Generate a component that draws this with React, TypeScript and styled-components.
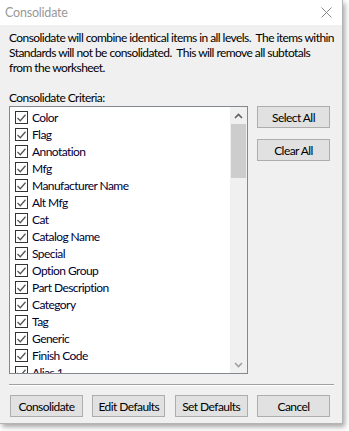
import styled, { createGlobalStyle } from 'styled-components';

const GlobalStyle = createGlobalStyle`
  html, body {
    margin: 0;
    padding: 0;
    background: #ffffff;
  }
  body {
    font-family: Lato, "Liberation Sans", Arial, sans-serif;
    font-size: 12px;
    letter-spacing: -0.56px;
  }
`;

const Page = styled.div`
  width: 349px;
  height: 431px;
  overflow: hidden;
`;

const Window = styled.div`
  width: 342px;
  height: 423px;
  background: #f0f0f0;
  border-right: 1px solid #b4b4b4;
  border-bottom: 1px solid #b4b4b4;
  box-shadow: 2px 3px 5px rgba(0, 0, 0, 0.35);
  display: flex;
  flex-direction: column;
  overflow: hidden;
`;

const TitleBar = styled.div`
  height: 25px;
  flex: none;
  background: #ffffff;
  display: flex;
  align-items: center;
  justify-content: space-between;
  padding: 0 10px 0 5px;
  color: #999999;
  font-size: 12.5px;
  letter-spacing: -0.2px;
`;

const Body = styled.div`
  flex: 1;
  padding: 5px 12px 0 9px;
  display: flex;
  flex-direction: column;
  color: #000000;
`;

const Description = styled.p`
  margin: 0;
  line-height: 15px;
  white-space: pre;
`;

const Label = styled.div`
  margin-top: 15px;
  line-height: 15px;
`;

const Middle = styled.div`
  margin-top: 1px;
  display: flex;
  gap: 9px;
`;

const ListBox = styled.div`
  width: 237px;
  height: 266px;
  flex: none;
  border: 1px solid #828790;
  background: #ffffff;
  display: flex;
  overflow: hidden;
`;

const Items = styled.div`
  flex: 1;
  padding-top: 2px;
  overflow: hidden;
`;

const Item = styled.div`
  height: 17px;
  display: flex;
  align-items: center;
  padding-left: 5px;
  gap: 4px;
  color: #000033;
  white-space: nowrap;
`;

const Box = styled.span`
  width: 11px;
  height: 11px;
  border: 1px solid #333333;
  background: #ffffff;
  display: flex;
  align-items: center;
  justify-content: center;
  flex: none;
`;

const Scrollbar = styled.div`
  width: 17px;
  flex: none;
  background: #f0f0f0;
  display: flex;
  flex-direction: column;
`;

const Arrow = styled.div`
  height: 17px;
  display: flex;
  align-items: center;
  justify-content: center;
`;

const Track = styled.div`
  flex: 1;
  padding: 0 1px;
`;

const Thumb = styled.div`
  height: 54px;
  background: #cdcdcd;
`;

const SideButtons = styled.div`
  display: flex;
  flex-direction: column;
  gap: 11px;
`;

const Button = styled.button`
  width: 73px;
  height: 22px;
  padding: 0;
  background: #e1e1e1;
  border: 1px solid #adadad;
  font-family: inherit;
  font-size: 12px;
  letter-spacing: inherit;
  color: #000000;
  white-space: nowrap;
`;

const Separator = styled.div`
  margin-top: 10px;
  height: 1px;
  width: 325px;
  background: #a0a0a0;
  border-bottom: 1px solid #ffffff;
`;

const Footer = styled.div`
  margin-top: 9px;
  padding-left: 1px;
  width: 320px;
  display: flex;
  justify-content: space-between;
`;

const criteria = [
  'Color',
  'Flag',
  'Annotation',
  'Mfg',
  'Manufacturer Name',
  'Alt Mfg',
  'Cat',
  'Catalog Name',
  'Special',
  'Option Group',
  'Part Description',
  'Category',
  'Tag',
  'Generic',
  'Finish Code',
  'Alias 1',
];

const Check = () => (
  <svg width="9" height="8" viewBox="0 0 9 8">
    <path d="M0.5 4 L3.3 6.8 L8.5 0.8" fill="none" stroke="#555" strokeWidth="1.3" />
  </svg>
);

const Chevron = ({ up }: { up?: boolean }) => (
  <svg width="9" height="6" viewBox="0 0 9 6">
    <path
      d={up ? 'M1 5 L4.5 1.5 L8 5' : 'M1 1 L4.5 4.5 L8 1'}
      fill="none"
      stroke={up ? '#606060' : '#a0a0a0'}
      strokeWidth="1.6"
    />
  </svg>
);

const App = () => {
  return (
    <Page>
      <GlobalStyle />
      <Window>
        <TitleBar>
          <span>Consolidate</span>
          <svg width="11" height="11" viewBox="0 0 11 11">
            <path d="M0.5 0.5 L10.5 10.5 M10.5 0.5 L0.5 10.5" stroke="#8a8a8a" strokeWidth="1" />
          </svg>
        </TitleBar>
        <Body>
          <Description>
            {'Consolidate will combine identical items in all levels.  The items within\nStandards will not be consolidated.  This will remove all subtotals\nfrom the worksheet.'}
          </Description>
          <Label>Consolidate Criteria:</Label>
          <Middle>
            <ListBox>
              <Items>
                {criteria.map((c) => (
                  <Item key={c}>
                    <Box>
                      <Check />
                    </Box>
                    {c}
                  </Item>
                ))}
              </Items>
              <Scrollbar>
                <Arrow>
                  <Chevron up />
                </Arrow>
                <Track>
                  <Thumb />
                </Track>
                <Arrow>
                  <Chevron />
                </Arrow>
              </Scrollbar>
            </ListBox>
            <SideButtons>
              <Button>Select All</Button>
              <Button>Clear All</Button>
            </SideButtons>
          </Middle>
          <Separator />
          <Footer>
            <Button>Consolidate</Button>
            <Button>Edit Defaults</Button>
            <Button>Set Defaults</Button>
            <Button>Cancel</Button>
          </Footer>
        </Body>
      </Window>
    </Page>
  );
};

export default App;
